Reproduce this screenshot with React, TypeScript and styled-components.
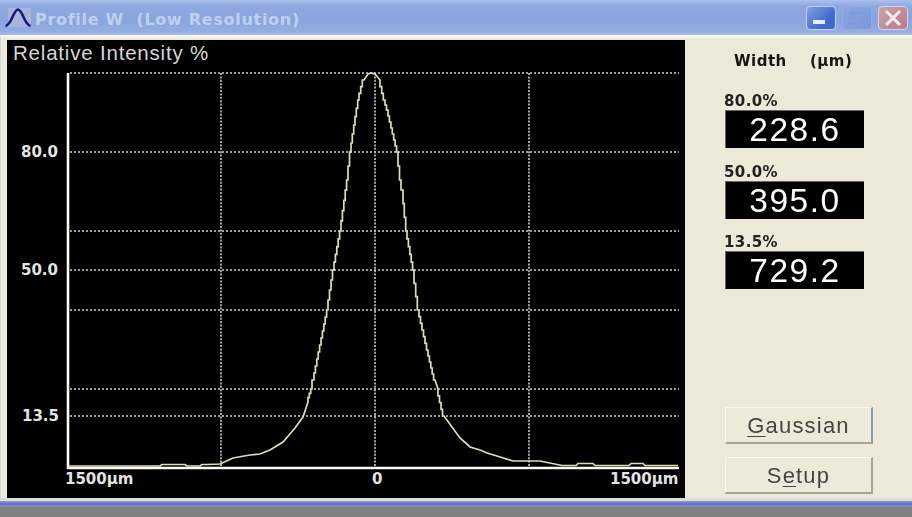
import React from 'react';
import styled, { createGlobalStyle } from 'styled-components';

const Global = createGlobalStyle`
  html, body { margin: 0; padding: 0; background: #808080; }
  body { font-family: "Liberation Sans", Arial, sans-serif; overflow: hidden; }
`;

const Window = styled.div`
  width: 912px;
  height: 517px;
  display: flex;
  flex-direction: column;
  filter: blur(0.6px);
`;

const TitleBar = styled.div`
  height: 35px;
  flex: none;
  display: flex;
  align-items: center;
  padding: 0 4px 0 5px;
  background: linear-gradient(180deg, #a9c0ec 0%, #8ea9e0 18%, #8aa5dd 60%, #95aee2 90%, #a6bce8 100%);
`;

const AppIcon = styled.svg`
  width: 26px;
  height: 20px;
  flex: none;
  margin-top: 1px;
`;

const Title = styled.div`
  margin-left: 4px;
  font-family: "DejaVu Sans", sans-serif;
  font-weight: 700;
  font-size: 16px;
  letter-spacing: 0.7px;
  color: #bfd0f1;
  white-space: pre;
  flex: 1;
  margin-top: 3px;
`;

const WinButton = styled.div<{ $kind: 'min' | 'max' | 'close' }>`
  width: 30px;
  height: 24px;
  margin-left: 6px;
  border-radius: 4px;
  margin-top: 1px;
  position: relative;
  box-sizing: border-box;
  display: flex;
  align-items: center;
  justify-content: center;
  background: ${p =>
    p.$kind === 'min' ? 'linear-gradient(135deg,#7f9fe6,#3f68cc 70%)'
    : p.$kind === 'max' ? 'linear-gradient(135deg,#8ba6e2,#7b98da)'
    : 'linear-gradient(135deg,#cba0ad,#bb7a88)'};
  border: 1px solid ${p => (p.$kind === 'min' ? '#c2d2f2' : p.$kind === 'max' ? '#93acdf' : '#cfd7ee')};
`;

const MinGlyph = styled.span`
  width: 12px;
  height: 4px;
  background: #e8eefb;
  position: absolute;
  left: 6px;
  bottom: 5px;
`;

const MaxGlyph = styled.span`
  width: 16px;
  height: 12px;
  border: 1px solid #7f99d8;
  border-top-width: 3px;
  box-sizing: border-box;
`;

const Body = styled.div`
  flex: none;
  height: 466px;
  box-sizing: border-box;
  background: #ece9d9;
  border-top: 3px solid #f6f6f2;
  border-bottom: 3px solid #dcdcd8;
  border-left: 1px solid #c6d4ee;
  padding: 2px 0 0 6px;
  display: flex;
`;

const Plot = styled.div`
  width: 678px;
  height: 458px;
  background: #000;
  flex: none;
`;

const PlotSvg = styled.svg`
  display: block;
  width: 678px;
  height: 458px;
`;

const GridLine = styled.line<{ $vertical?: boolean }>`
  stroke: #cfcfcf;
  stroke-width: 1.6;
  stroke-dasharray: ${p => (p.$vertical ? '2 1.4' : '2 2')};
`;

const AxisLine = styled.line`
  stroke: #fbfbf2;
  stroke-width: 2.6;
`;

const Curve = styled.polyline`
  fill: none;
  stroke: #dedeb2;
  stroke-width: 1.7;
`;

const AxisTitle = styled.text`
  fill: #d6d6d6;
  font-family: "Liberation Sans", sans-serif;
  font-size: 20.5px;
  letter-spacing: 0.8px;
`;

const AxisLabel = styled.text`
  fill: #e4e4e4;
  font-family: "DejaVu Sans", sans-serif;
  font-weight: 700;
  font-size: 15px;
`;

const Side = styled.div`
  flex: 1;
  display: flex;
  flex-direction: column;
  padding: 11px 0 0 40px;
`;

const Heading = styled.div`
  font-family: "DejaVu Sans", sans-serif;
  font-weight: 700;
  font-size: 15px;
  color: #151515;
  white-space: pre;
  margin-left: 9px;
  height: 24px;
  line-height: 20px;
  letter-spacing: 0.5px;
  word-spacing: 2px;
`;

const Readouts = styled.div`
  display: flex;
  flex-direction: column;
  gap: 14.5px;
  margin-top: 17px;
`;

const Readout = styled.div`
  display: flex;
  flex-direction: column;
`;

const ReadoutLabel = styled.div`
  font-family: "DejaVu Sans", sans-serif;
  font-weight: 700;
  font-size: 15px;
  letter-spacing: 0.4px;
  height: 18px;
  line-height: 18px;
  margin-left: -1px;
  color: #222;
`;

const ReadoutValue = styled.div`
  width: 139px;
  height: 38px;
  background: #000;
  color: #fff;
  font-size: 33.5px;
  letter-spacing: 1.5px;
  line-height: 37px;
  text-align: center;
  border-top: 1px solid #666;
  border-left: 1px solid #666;
  box-sizing: border-box;
`;

const Buttons = styled.div`
  margin-top: auto;
  margin-bottom: 4px;
  display: flex;
  flex-direction: column;
  gap: 13px;
`;

const Button = styled.div<{ $focused?: boolean }>`
  width: 148px;
  height: 37px;
  box-sizing: border-box;
  background: #ecead9;
  border-top: 1px solid #f8f8f2;
  border-left: 1px solid #f8f8f2;
  border-bottom: 2px solid #a8a692;
  border-right: 2px solid ${p => (p.$focused ? '#8b98bf' : '#a8a692')};
  font-size: 22px;
  letter-spacing: 1.2px;
  color: #444;
  text-align: center;
  line-height: 35px;
`;

const Mnemonic = styled.span`
  text-decoration: underline;
  text-underline-offset: 3px;
  text-decoration-thickness: 1px;
`;

const BottomEdge = styled.div`
  height: 6px;
  flex: none;
  background: linear-gradient(180deg, #8d9ad0, #5f70c4 50%, #8d96c4);
`;

const Desk = styled.div`
  flex: 1;
  background: #808080;
`;

const left: [number, number][] = [
  [69, 466], [160, 466], [162, 464.5], [185, 464.5], [187, 466], [200, 466], [202, 464.5], [207, 464.5],
  [220, 464], [233, 458], [250, 455], [260, 454], [270, 450], [283, 442], [295, 428], [303, 417],
  [308, 402], [312, 389], [314, 380], [321, 345], [328, 310], [334, 270], [341, 231], [348, 180],
  [351, 152], [355, 125], [359, 100], [364, 80], [368, 74], [371, 73],
];
const right: [number, number][] = [
  [375, 74], [380, 80], [385, 100], [388, 110], [398, 152], [401, 180], [403, 190], [407, 231],
  [414, 270], [419, 310], [428, 350], [435, 380], [438, 389], [444, 416], [452, 427], [460, 438],
  [470, 447], [480, 450], [487, 453], [497, 456], [513, 461], [540, 461], [562, 465.5], [576, 465.5],
  [578, 463.5], [593, 463.5], [595, 465.5], [629, 465.5], [631, 463.5], [643, 463.5], [645, 465.5], [678, 465.5],
];

// The instrument trace rises in small stairs on the steep flanks and runs straight on the shallow tails.
function stepped(pts: [number, number][]): string {
  const out: string[] = [];
  for (let i = 0; i < pts.length - 1; i++) {
    const [x0, y0] = pts[i];
    const [x1, y1] = pts[i + 1];
    const steep = Math.abs(y1 - y0) > 3 * Math.abs(x1 - x0);
    if (steep) {
      const steps = Math.max(1, Math.round(Math.abs(x1 - x0) / 1.5));
      for (let s = 0; s < steps; s++) {
        const x = x0 + ((x1 - x0) * s) / steps;
        const xn = x0 + ((x1 - x0) * (s + 1)) / steps;
        const y = y0 + ((y1 - y0) * (s + 1)) / steps;
        out.push(`${x.toFixed(1)},${y.toFixed(1)}`, `${xn.toFixed(1)},${y.toFixed(1)}`);
      }
    } else {
      out.push(`${x0},${y0}`);
    }
    out.push(`${x1},${y1}`);
  }
  return out.join(' ');
}

const readouts = [
  { label: '80.0%', value: '228.6' },
  { label: '50.0%', value: '395.0' },
  { label: '13.5%', value: '729.2' },
];

const hLines = [73, 152, 231, 270, 310, 389, 416];
const vLines = [221, 375, 529];

export default function App() {
  return (
    <Window>
      <Global />
      <TitleBar>
        <AppIcon viewBox="0 0 26 20">
          <rect x="3" y="0" width="23" height="19" fill="#a9b5da" />
          <path d="M0.5 18 C7 17 8 2 13 1.5 C18 2 19 17 25.5 18" fill="none" stroke="#141c78" strokeWidth="2.6" />
        </AppIcon>
        <Title>Profile W  (Low Resolution)</Title>
        <WinButton $kind="min"><MinGlyph /></WinButton>
        <WinButton $kind="max"><MaxGlyph /></WinButton>
        <WinButton $kind="close">
          <svg width="18" height="16" viewBox="0 0 18 16">
            <path d="M2 1 L16 15 M16 1 L2 15" stroke="#f3ecee" strokeWidth="3" />
          </svg>
        </WinButton>
      </TitleBar>
      <Body>
        <Plot>
          <PlotSvg viewBox="7 40 678 458">
            <AxisTitle x="13" y="60">Relative Intensity %</AxisTitle>
            {hLines.map(y => <GridLine key={y} x1="70" x2="679" y1={y} y2={y} />)}
            {vLines.map(x => <GridLine key={x} $vertical x1={x} x2={x} y1="73" y2="466" />)}
            <AxisLine x1="68" x2="68" y1="73" y2="469" />
            <AxisLine x1="67" x2="679" y1="468" y2="468" />
            <Curve points={stepped([...left, ...right])} />
            <AxisLabel x="21" y="157">80.0</AxisLabel>
            <AxisLabel x="21" y="275">50.0</AxisLabel>
            <AxisLabel x="22" y="421">13.5</AxisLabel>
            <AxisLabel x="65" y="484">1500µm</AxisLabel>
            <AxisLabel x="372" y="484">0</AxisLabel>
            <AxisLabel x="610" y="484">1500µm</AxisLabel>
          </PlotSvg>
        </Plot>
        <Side>
          <Heading>Width   (µm)</Heading>
          <Readouts>
            {readouts.map(r => (
              <Readout key={r.label}>
                <ReadoutLabel>{r.label}</ReadoutLabel>
                <ReadoutValue>{r.value}</ReadoutValue>
              </Readout>
            ))}
          </Readouts>
          <Buttons>
            <Button $focused><Mnemonic>G</Mnemonic>aussian</Button>
            <Button>S<Mnemonic>e</Mnemonic>tup</Button>
          </Buttons>
        </Side>
      </Body>
      <BottomEdge />
      <Desk />
    </Window>
  );
}
